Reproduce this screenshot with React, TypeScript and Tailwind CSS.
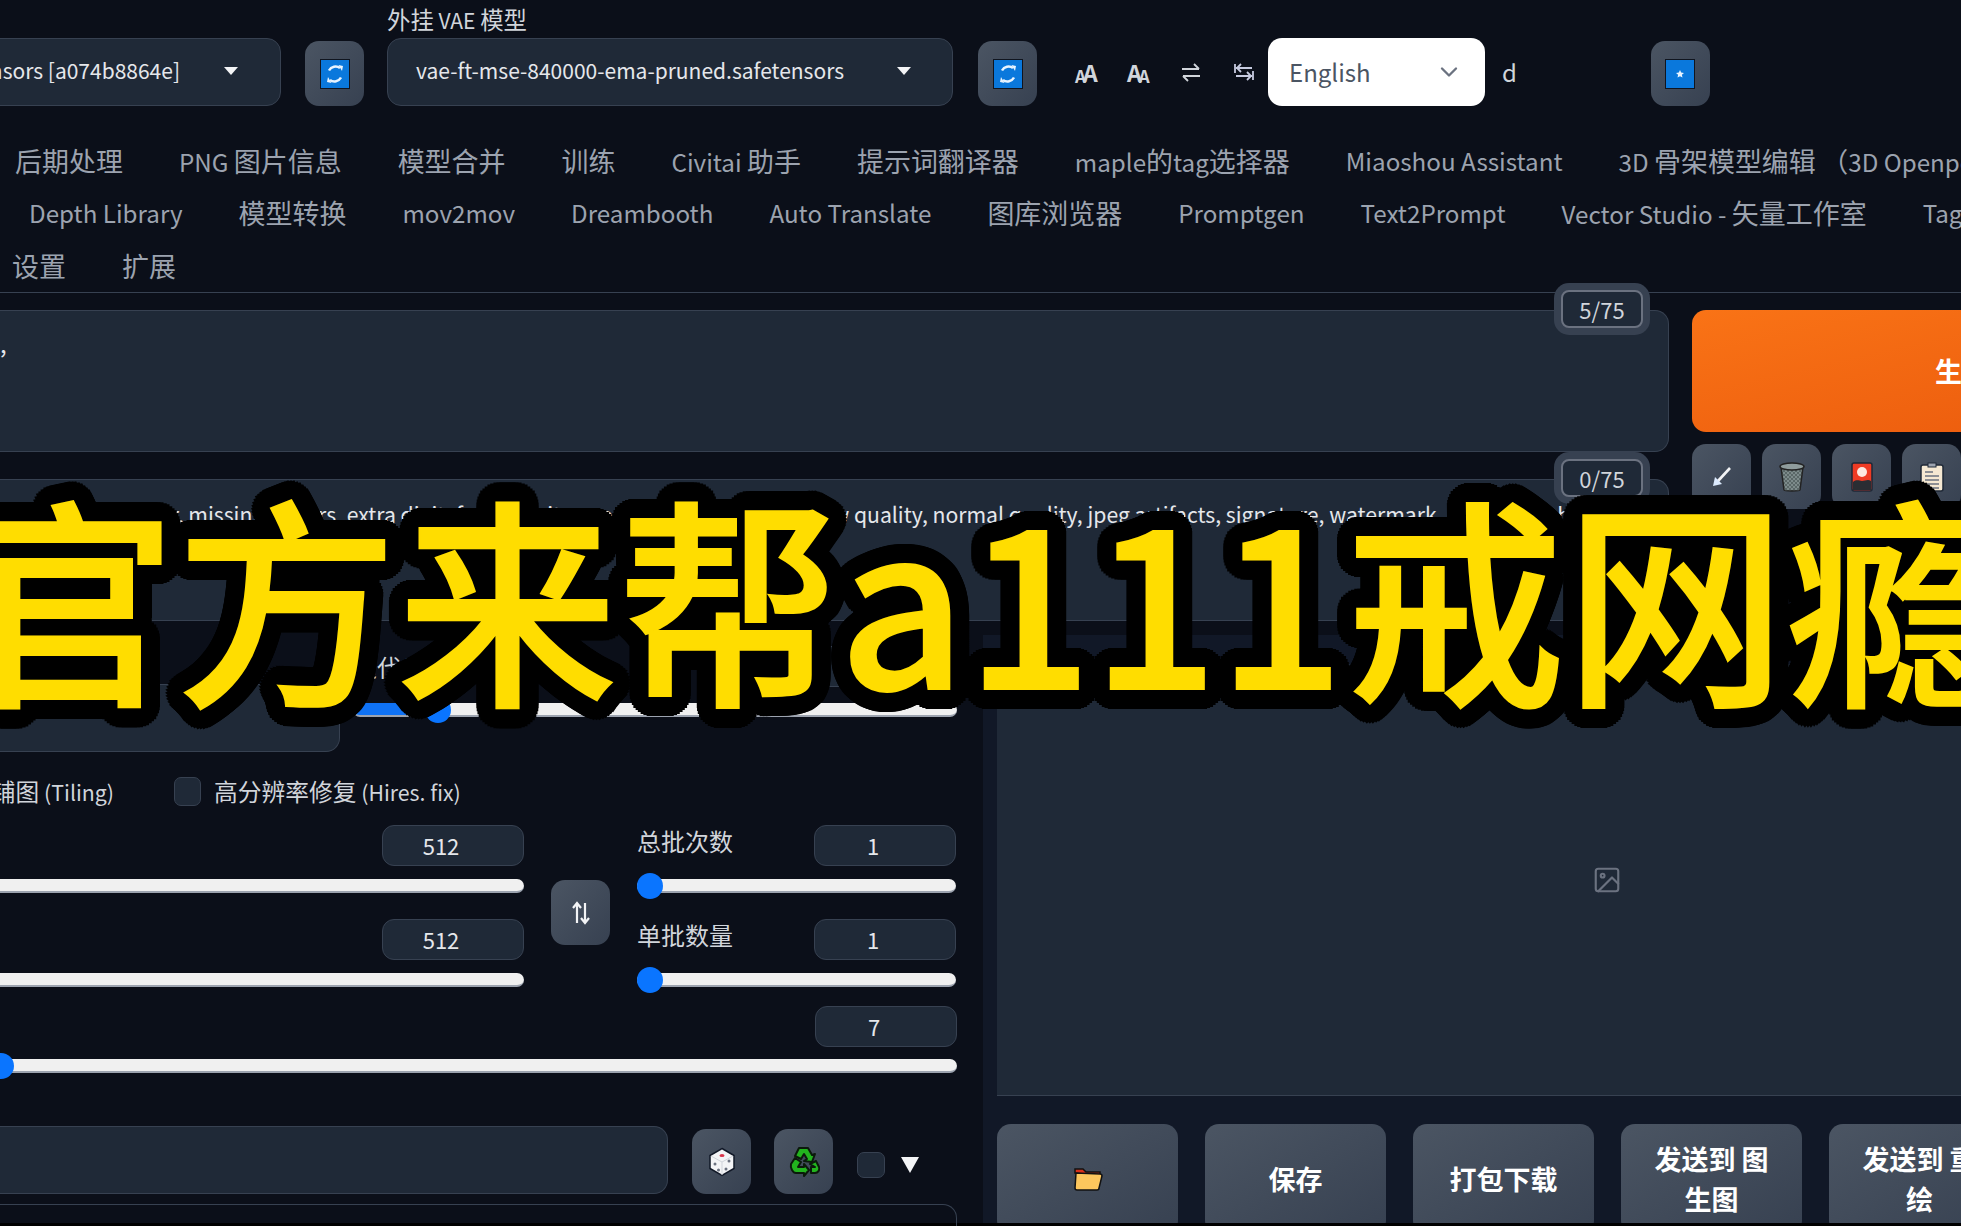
import { ChevronDown } from "lucide-react";

const tabRows = [
  {
    className: "pl-[15px]",
    items: ["后期处理", "PNG 图片信息", "模型合并", "训练", "Civitai 助手", "提示词翻译器", "maple的tag选择器", "Miaoshou Assistant", "3D 骨架模型编辑 （3D Openpose）"],
  },
  {
    className: "pl-[29px]",
    items: ["Depth Library", "模型转换", "mov2mov", "Dreambooth", "Auto Translate", "图库浏览器", "Promptgen", "Text2Prompt", "Vector Studio - 矢量工作室", "Tag Autocomplete"],
  },
  { className: "pl-[12px]", items: ["设置", "扩展"] },
];

const Mixed = ({ text }: { text: string }) => (
  <>
    {text.split(/([\u3000-\u9fff\uff00-\uffef]+)/).map((part, i) =>
      i % 2 === 1 ? (
        <span key={i} className="text-[1.115em]">
          {part}
        </span>
      ) : (
        part
      )
    )}
  </>
);

const titleShadow = [20, 10]
  .flatMap((radius) =>
    Array.from({ length: 40 }, (_, i) => {
      const angle = (i / 40) * Math.PI * 2;
      return `${(Math.cos(angle) * radius).toFixed(1)}px ${(Math.sin(angle) * radius).toFixed(1)}px 0 #000`;
    })
  )
  .join(",");

const RefreshEmoji = () => (
  <svg width="30" height="30" viewBox="0 0 30 30">
    <rect x="0.5" y="0.5" width="29" height="29" fill="#0a78dc" stroke="#10151f" />
    <path d="M9 11.500a7.500 7.500 0 0 1 11-2.500" fill="none" stroke="#e8f4ff" strokeWidth="2.500" />
    <path d="M21 18.500a7.500 7.500 0 0 1-11 2.500" fill="none" stroke="#e8f4ff" strokeWidth="2.500" />
    <path d="M18.500 6l4.500 1-1 5zM11.500 24l-4.500-1 1-5z" fill="#e8f4ff" />
  </svg>
);

const StarEmoji = () => (
  <svg width="30" height="30" viewBox="0 0 30 30">
    <rect x="0.5" y="0.5" width="29" height="29" fill="#0a78dc" stroke="#10151f" />
    <path d="M15 11l1.200 2.600 2.800.3-2.100 1.900.6 2.800-2.500-1.400-2.500 1.400.6-2.800-2.100-1.900 2.800-.3z" fill="#e8f4ff" />
  </svg>
);

const PasteArrow = () => (
  <svg width="24" height="24" viewBox="0 0 24 24">
    <path d="M20 3L8 16" stroke="#f3f4f6" strokeWidth="2.600" />
    <path d="M3 21l2-9 7 7z" fill="#dbeafe" />
  </svg>
);

const TrashEmoji = () => (
  <svg width="28" height="32" viewBox="0 0 28 32">
    <defs>
      <pattern id="mesh" width="4" height="4" patternUnits="userSpaceOnUse">
        <rect width="4" height="4" fill="#7d8b8b" />
        <path d="M0 0l4 4M4 0L0 4" stroke="#4b5757" strokeWidth="0.7" />
      </pattern>
    </defs>
    <path d="M3 6l3 23c.2 1.400 15.800 1.400 16 0l3-23z" fill="url(#mesh)" stroke="#222" strokeWidth="1.500" />
    <ellipse cx="14" cy="5.500" rx="12" ry="3.500" fill="#8f9c9c" stroke="#222" strokeWidth="1.500" />
  </svg>
);

const CardEmoji = () => (
  <svg width="22" height="30" viewBox="0 0 22 30">
    <rect x="1" y="1" width="20" height="28" rx="2" fill="#ef3b24" stroke="#1f2937" strokeWidth="1.500" />
    <path d="M2 20c4-3 6-1 9-1s6-2 9 0v9H2z" fill="#2a2d33" />
    <circle cx="11" cy="10" r="5" fill="#fde8e0" />
  </svg>
);

const ClipboardEmoji = () => (
  <svg width="24" height="30" viewBox="0 0 24 30">
    <rect x="1" y="3" width="22" height="26" rx="2" fill="#f5e8d2" stroke="#1f2937" strokeWidth="1.500" />
    <rect x="8" y="1" width="8" height="4" fill="#9ca3af" stroke="#1f2937" />
    <path d="M5 10h8M5 14h14M5 18h14M5 22h14M5 26h14" stroke="#6b7280" strokeWidth="1.500" />
  </svg>
);

const FolderEmoji = () => (
  <svg width="30" height="24" viewBox="0 0 30 24">
    <path d="M2 6V2h8l3 3h14v4z" fill="#d9301a" stroke="#111" strokeWidth="1.500" />
    <path d="M3 6l24 1c1 0 2 1 2 2l-3 12c0 1-1 2-2 2H4c-1 0-2-1-2-2z" fill="#fcc65d" stroke="#111" strokeWidth="1.500" />
  </svg>
);

const DiceEmoji = () => (
  <svg width="30" height="30" viewBox="0 0 30 30">
    <path d="M15 1.500L27 8.500v13L15 28.500 3 21.500v-13z" fill="#f3f4f6" stroke="#111827" strokeWidth="1.500" />
    <path d="M4 9l11 6 11-6M15 15v13" fill="none" stroke="#d1d5db" strokeWidth="1" />
    <ellipse cx="15" cy="8.500" rx="2.500" ry="1.500" fill="#d9344a" />
    <circle cx="8" cy="17" r="1.500" fill="#6b7280" />
    <circle cx="11.500" cy="23" r="1.500" fill="#6b7280" />
    <circle cx="22" cy="14" r="1.500" fill="#6b7280" />
    <circle cx="19" cy="22" r="1.500" fill="#6b7280" />
  </svg>
);

const RecycleEmoji = () => (
  <svg width="32" height="34" viewBox="0 0 32 34">
    <g fill="#22b41e" stroke="#0b1a0b" strokeWidth="2" strokeLinejoin="round">
      <path d="M11 3h9l4 7 3-1-3 8-8-1 3-2-3-5-3 5-6-3z" />
      <path d="M3 19l4-6 6 4-3 5h6v-3l5 6-5 6v-3H8c-3 0-6-5-5-9z" />
      <path d="M22 19l6-3 3 6c1 3-1 6-4 6h-4v-6h4z" />
    </g>
  </svg>
);

const SwapArrows = () => (
  <svg width="22" height="24" viewBox="0 0 22 24" fill="none" stroke="#f3f4f6" strokeWidth="2.200">
    <path d="M7 22V3M3 7l4-5 4 5" />
    <path d="M15 2v19M11 17l4 5 4-5" />
  </svg>
);

const ImagePlaceholder = () => (
  <svg width="30" height="30" viewBox="0 0 24 24" fill="none" stroke="#6b7280" strokeWidth="1.700" strokeLinecap="round" strokeLinejoin="round">
    <rect x="3" y="3" width="18" height="18" rx="2" />
    <circle cx="8.500" cy="8.500" r="1.500" />
    <path d="M21 15l-5-5L5 21" />
  </svg>
);

const SwapLines = () => (
  <svg width="20" height="20" viewBox="0 0 20 20" fill="none" stroke="#d1d5db" strokeWidth="1.800">
    <path d="M1 7h17M13 2l5 5" />
    <path d="M19 14H2M7 19l-5-5" />
  </svg>
);

const TabLines = () => (
  <svg width="20" height="20" viewBox="0 0 20 20" fill="none" stroke="#c7cbe0" strokeWidth="1.800">
    <path d="M1 2v9M2 6h16M7 2L3 6l4 4" />
    <path d="M19 9v9M18 14H2M13 10l4 4-4 4" />
  </svg>
);

const EmojiButton = ({ children }: { children: React.ReactNode }) => (
  <button className="flex h-[65px] w-[59px] shrink-0 items-center justify-center rounded-[14px] bg-linear-to-br from-[#4b5563] to-[#374151]">
    {children}
  </button>
);

const Slider = ({ percent = 0, className = "" }: { percent?: number; className?: string }) => (
  <div className={`relative h-[14px] rounded-full border-b-2 border-[#9ca3af] bg-[#f0f0f0] ${className}`}>
    {percent > 0 && (
      <div className="absolute inset-y-0 left-0 rounded-l-full bg-[#0f72f5]" style={{ width: `${percent}%` }} />
    )}
    <div
      className="absolute top-[-6px] h-[26px] w-[26px] rounded-full bg-[#0a75ff]"
      style={{ left: `${percent}%`, transform: percent > 0 ? "translateX(-50%)" : undefined }}
    />
  </div>
);

const NumberBox = ({ value, className = "" }: { value: string; className?: string }) => (
  <div className={`flex h-[41px] w-[142px] items-center justify-center rounded-[12px] border border-[#374151] bg-[#1f2937] pr-[24px] text-[22px] text-[#e5e7eb] ${className}`}>
    {value}
  </div>
);

const SliderField = ({ label, value, sliderClass = "" }: { label?: string; value: string; sliderClass?: string }) => (
  <div className="flex flex-col">
    <div className="flex h-[41px] items-center justify-between">
      <span className="pb-[9px] text-[24px] text-[#d1d5db]">{label}</span>
      <NumberBox value={value} />
    </div>
    <Slider className={`mt-[13px] ${sliderClass}`} />
  </div>
);

const Counter = ({ text }: { text: string }) => (
  <div className="absolute right-[25px] top-[-21px] flex h-[38px] w-[82px] items-center justify-center rounded-[8px] border-2 border-[#6b7280] bg-[#1f2937] text-[22px] text-[#d1d5db] shadow-[0_0_0_7px_#374151]">
    {text}
  </div>
);

const GalleryButton = ({ children }: { children: React.ReactNode }) => (
  <button className="flex h-[110px] w-[181px] shrink-0 items-center justify-center rounded-[14px] bg-linear-to-br from-[#4b5563] to-[#374151] text-center text-[27px] font-bold leading-[40px] text-white">
    <span>{children}</span>
  </button>
);

export default function App() {
  return (
    <div className="relative h-[1226px] w-[1961px] overflow-hidden bg-[#0b0f19] font-['Noto_Sans_CJK_SC','Noto_Sans',sans-serif]">
      {/* model row */}
      <header className="flex h-[106px] items-end">
        <div className="ml-[-200px] flex h-[68px] w-[481px] items-center justify-end rounded-[14px] border border-[#374151] bg-[#1f2937] pb-[2px] pr-[42px] text-[21px] text-[#e5e7eb]">
          <span className="whitespace-nowrap">majicmix.safetensors [a074b8864e]</span>
          <span className="ml-[44px] h-0 w-0 border-x-[7px] border-t-[8px] border-x-transparent border-t-[#f3f4f6]" />
        </div>
        <div className="ml-[24px]"><EmojiButton><RefreshEmoji /></EmojiButton></div>
        <div className="ml-[23px] flex flex-col">
          <span className="mb-[6px] h-[26px] text-[21px] leading-[26px] text-[#d1d5db]"><Mixed text="外挂 VAE 模型" /></span>
          <div className="flex h-[68px] w-[566px] items-center justify-between rounded-[14px] border border-[#374151] bg-[#1f2937] pb-[2px] pl-[28px] pr-[41px] text-[21px] text-[#e5e7eb]">
            <span className="whitespace-nowrap">vae-ft-mse-840000-ema-pruned.safetensors</span>
            <span className="h-0 w-0 border-x-[7px] border-t-[8px] border-x-transparent border-t-[#f3f4f6]" />
          </div>
        </div>
        <div className="ml-[25px]"><EmojiButton><RefreshEmoji /></EmojiButton></div>
        <div className="ml-[38px] flex h-[68px] w-[193px] items-center text-[#d1d5db]">
          <span className="flex w-[52px] items-end font-bold leading-none">
            <span className="text-[17px]">A</span><span className="ml-[-3px] text-[23px]">A</span>
          </span>
          <span className="flex w-[54px] items-end font-bold leading-none">
            <span className="text-[23px]">A</span><span className="ml-[-3px] text-[17px]">A</span>
          </span>
          <span className="w-[53px]"><SwapLines /></span>
          <span><TabLines /></span>
        </div>
        <div className="flex h-[68px] w-[217px] items-center justify-between rounded-[14px] bg-white pl-[21px] pr-[22px] text-[24px] text-[#4b5563]">
          English
          <ChevronDown size={28} strokeWidth={2} color="#6b7280" />
        </div>
        <span className="ml-[17px] flex h-[68px] items-center text-[24px] text-[#d1d5db]">d</span>
        <div className="ml-[134px]"><EmojiButton><StarEmoji /></EmojiButton></div>
      </header>

      {/* tabs */}
      <nav className="flex h-[187px] flex-col border-b border-[#374151] pt-[29px]">
        {tabRows.map((row) => (
          <div key={row.className} className={`flex h-[53px] items-center gap-[56px] whitespace-nowrap text-[24.2px] text-[#9ca3af] ${row.className}`}>
            {row.items.map((item) => (
              <span key={item}><Mixed text={item} /></span>
            ))}
          </div>
        ))}
      </nav>

      {/* prompts and generate */}
      <section className="flex h-[342px]">
        <div className="w-[1669px] shrink-0 pt-[17px]">
          <div className="relative h-[142px] rounded-r-[14px] border border-l-0 border-[#374151] bg-[#1f2937] pt-[14px] text-[24px] text-[#e5e7eb]">
            ,
            <Counter text="5/75" />
          </div>
          <div className="relative mt-[27px] h-[142px] rounded-r-[14px] border border-l-0 border-[#374151] bg-[#1f2937] pt-[18px] text-[21.2px] text-[#e5e7eb]">
            <div className="ml-[-58px] w-[1640px] overflow-hidden whitespace-nowrap">
              bad anatomy, text, error, missing fingers, extra digit, fewer digits, cropped, worst quality, low quality, normal quality, jpeg artifacts, signature, watermark, username, blurry
            </div>
            <Counter text="0/75" />
          </div>
        </div>
        <div className="ml-[23px] flex-1 overflow-hidden pt-[17px]">
          <div className="flex h-[122px] w-[540px] items-center justify-center rounded-[14px] bg-linear-to-br from-[#f97316] to-[#ea580c] text-[27px] font-bold text-white">
            生成
          </div>
          <div className="mt-[12px] flex gap-[11px]">
            <EmojiButton><PasteArrow /></EmojiButton>
            <EmojiButton><TrashEmoji /></EmojiButton>
            <EmojiButton><CardEmoji /></EmojiButton>
            <EmojiButton><ClipboardEmoji /></EmojiButton>
          </div>
        </div>
      </section>

      {/* controls and gallery */}
      <main className="flex h-[588px]">
        <div className="w-[983px] shrink-0">
          <div className="flex h-[122px]">
            <div className="mt-[49px] h-[68px] w-[340px] rounded-r-[14px] border border-l-0 border-[#374151] bg-[#1f2937]" />
            <div className="ml-[13px] w-[604px] pt-[15px]">
              <div className="flex h-[41px] items-center justify-between pb-[8px]">
                <span className="text-[24px] text-[#d1d5db]">迭代步数</span>
                <NumberBox value="20" />
              </div>
              <Slider percent={14} className="mt-[12px]" />
            </div>
          </div>
          <div className="mt-[19px] flex h-[30px] items-center text-[21.3px] text-[#d1d5db]">
            <span className="flex w-[114px] shrink-0 justify-end whitespace-nowrap">
              <span><Mixed text="平铺图 (Tiling)" /></span>
            </span>
            <span className="ml-[60px] h-[29px] w-[27px] rounded-[7px] border border-[#374151] bg-[#1f2937]" />
            <span className="ml-[13px] whitespace-nowrap"><Mixed text="高分辨率修复 (Hires. fix)" /></span>
          </div>
          <div className="mt-[19px] flex">
            <div className="flex w-[524px] flex-col gap-[26px]">
              <SliderField value="512" sliderClass="ml-[-60px]" />
              <SliderField value="512" sliderClass="ml-[-60px]" />
            </div>
            <div className="ml-[27px] mt-[55px]"><EmojiButton><SwapArrows /></EmojiButton></div>
            <div className="ml-[27px] flex w-[319px] flex-col gap-[26px]">
              <SliderField label="总批次数" value="1" />
              <SliderField label="单批数量" value="1" />
            </div>
          </div>
          <div className="mt-[19px] w-[957px]">
            <NumberBox value="7" className="ml-auto" />
            <div className="ml-[-12px]"><Slider className="mt-[12px]" /></div>
          </div>
          <div className="mt-[53px] flex items-end">
            <div className="h-[68px] w-[668px] rounded-r-[14px] border border-l-0 border-[#374151] bg-[#1f2937]" />
            <div className="ml-[24px]"><EmojiButton><DiceEmoji /></EmojiButton></div>
            <div className="ml-[23px]"><EmojiButton><RecycleEmoji /></EmojiButton></div>
            <span className="mb-[16px] ml-[24px] h-[26px] w-[28px] rounded-[7px] border border-[#374151] bg-[#1f2937]" />
            <span className="mb-[21px] ml-[16px] h-0 w-0 border-x-[9px] border-t-[16px] border-x-transparent border-t-[#f3f4f6]" />
          </div>
          <div className="mt-[10px] h-[40px] w-[957px] rounded-tr-[14px] border border-l-0 border-[#374151]" />
        </div>
        <div className="flex-1 overflow-hidden bg-[#111827] pl-[14px] pt-[29px]">
          <div className="flex h-[432px] w-[1220px] items-center justify-center border-b border-[#374151] bg-[#1f2937]">
            <ImagePlaceholder />
          </div>
          <div className="mt-[28px] flex w-[1100px] gap-[27px]">
            <GalleryButton><FolderEmoji /></GalleryButton>
            <GalleryButton>保存</GalleryButton>
            <GalleryButton>打包下载</GalleryButton>
            <GalleryButton>发送到 图<br />生图</GalleryButton>
            <GalleryButton>发送到 重<br />绘</GalleryButton>
          </div>
        </div>
      </main>
      <div className="h-[3px] bg-black" />

      {/* video title lying over the page */}
      <div
        className="pointer-events-none absolute left-[-45px] top-[443px] whitespace-nowrap text-[221px] font-medium leading-[300px] text-[#ffdd00] [-webkit-text-stroke:2px_#ffdd00]"
        style={{ textShadow: titleShadow }}
      >
        官方来帮a111戒网瘾
      </div>
    </div>
  );
}
